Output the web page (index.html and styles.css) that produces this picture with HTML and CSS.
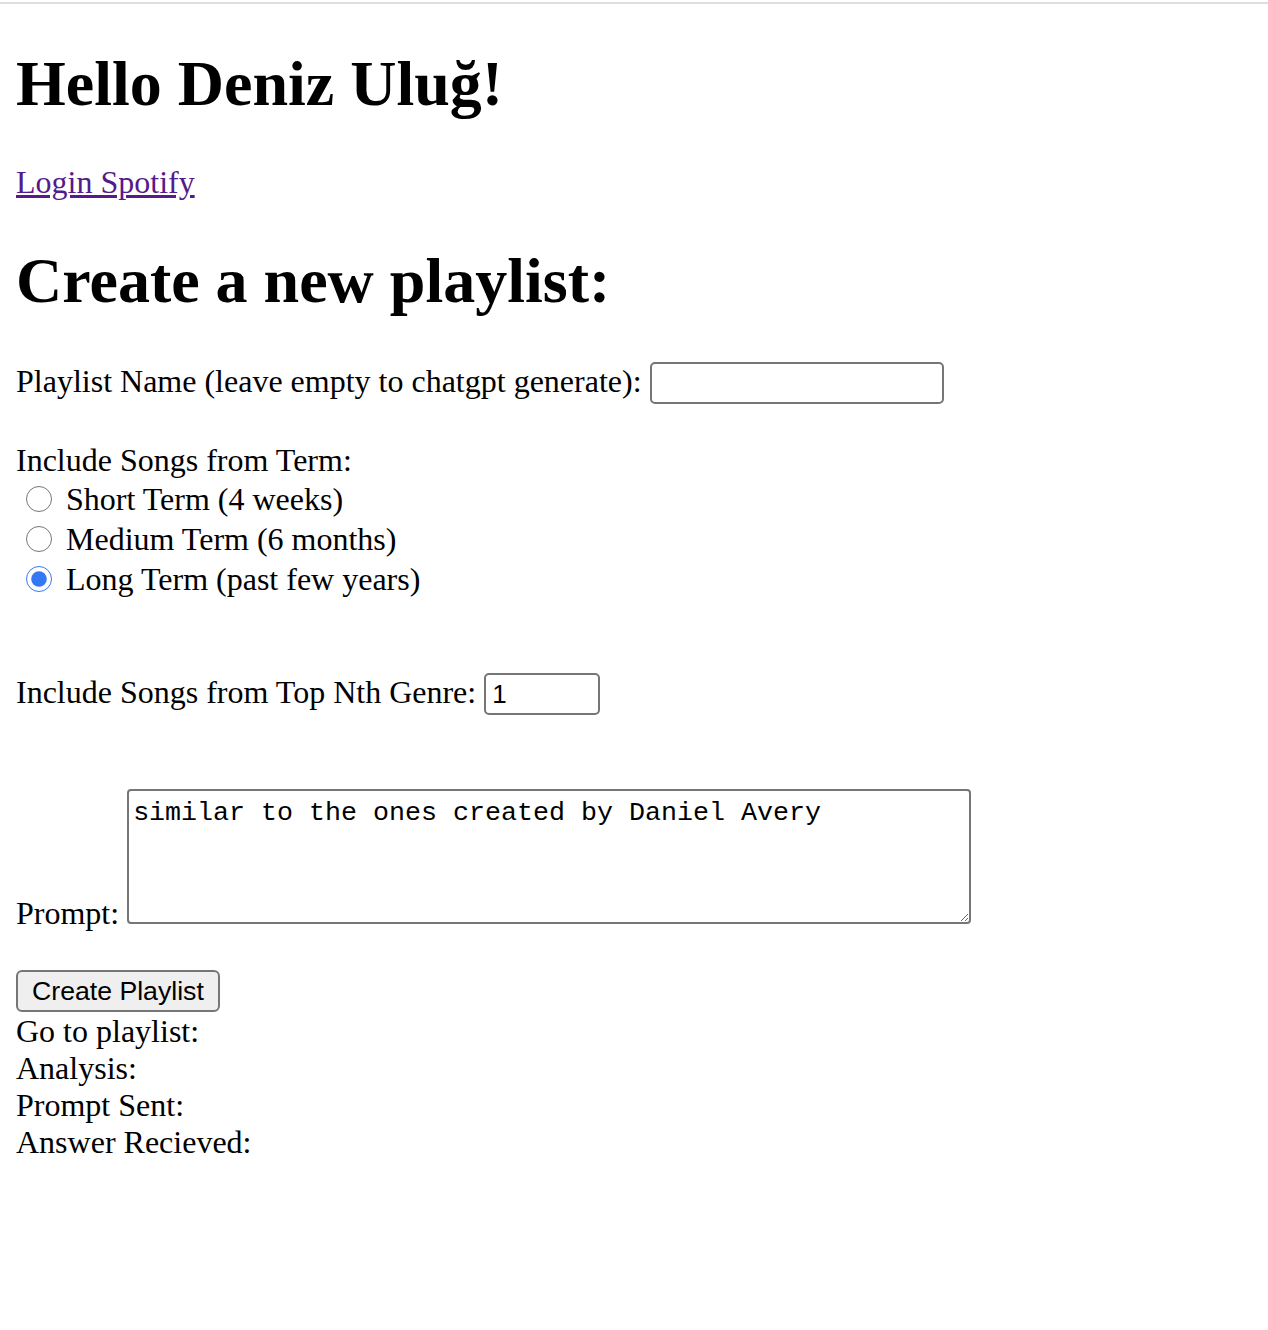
FILE: index.html
```html
<!DOCTYPE html>
<html lang="en">
<head>
    <meta charset="UTF-8">
    <meta name="viewport" content="width=device-width, initial-scale=1.0">
    <title>Spotify Playlist Generator</title>
    <link rel="stylesheet" href="styles.css">
</head>
<body>
    <div class="window-edge"></div>

    <h1 class="greeting">Hello Deniz Uluğ!</h1>
    <p class="login"><a href="#" class="login-link">Login Spotify</a></p>

    <h1 class="form-title">Create a new playlist:</h1>

    <form class="playlist-form">
        <div class="field name-field">
            <label for="playlistName">Playlist Name (leave empty to chatgpt generate):</label>
            <input type="text" id="playlistName" class="text-input name-input">
        </div>

        <div class="field term-field">
            <div>Include Songs from Term:</div>
            <div class="radio-row">
                <input type="radio" name="term" id="shortTerm" class="radio">
                <label for="shortTerm">Short Term (4 weeks)</label>
            </div>
            <div class="radio-row">
                <input type="radio" name="term" id="mediumTerm" class="radio">
                <label for="mediumTerm">Medium Term (6 months)</label>
            </div>
            <div class="radio-row">
                <input type="radio" name="term" id="longTerm" class="radio" checked>
                <label for="longTerm">Long Term (past few years)</label>
            </div>
        </div>

        <div class="field genre-field">
            <label for="genreRank">Include Songs from Top Nth Genre:</label>
            <input type="text" id="genreRank" class="text-input genre-input" value="1">
        </div>

        <div class="field prompt-field">
            <label for="prompt">Prompt:</label>
            <textarea id="prompt" class="prompt-input">similar to the ones created by Daniel Avery</textarea>
        </div>

        <button type="button" class="create-button">Create Playlist</button>
    </form>

    <div class="results">
        <div>Go to playlist:</div>
        <div>Analysis:</div>
        <div>Prompt Sent:</div>
        <div>Answer Recieved:</div>
    </div>
</body>
</html>
```

FILE: styles.css
```css
* {
    box-sizing: border-box;
}

body {
    margin: 0;
    padding: 0 16px;
    font-family: 'Liberation Serif', 'Times New Roman', serif;
    font-size: 32px;
    color: #000000;
    background-color: #ffffff;
}

.window-edge {
    height: 2px;
    margin: 2px -16px 0;
    background: #dedede;
}

h1 {
    font-size: 64px;
    font-weight: bold;
}

.greeting {
    margin: 43px 0 43px;
}

.login {
    margin: 0;
}

.login-link {
    color: #551a8b;
}

.form-title {
    margin: 43px 0 44px;
}

.field {
    margin-bottom: 36px;
}

.name-field {
    margin-bottom: 38px;
}

.text-input {
    font-family: 'Liberation Sans', Arial, sans-serif;
    font-size: 26px;
    height: 42px;
    padding: 2px 6px;
    border: 2px solid #767676;
    border-radius: 5px;
    margin: 0;
    vertical-align: baseline;
}

.name-input {
    width: 294px;
}

.radio-row {
    height: 40px;
    display: flex;
    align-items: center;
}

.radio {
    width: 26px;
    height: 26px;
    margin: 0 14px 0 10px;
    accent-color: #3478f6;
}

.genre-field {
    margin-top: 74px;
    margin-bottom: 74px;
}

.genre-input {
    width: 116px;
}

.prompt-field {
    margin-bottom: 38px;
}

.prompt-input {
    width: 844px;
    height: 135px;
    margin: 0;
    padding: 7px 4px 4px;
    font-family: 'Liberation Mono', 'Courier New', monospace;
    font-size: 26.67px;
    border: 2px solid #767676;
    border-radius: 4px;
    vertical-align: baseline;
}

.create-button {
    display: block;
    font-family: 'Liberation Sans', Arial, sans-serif;
    font-size: 26.67px;
    height: 42px;
    padding: 0 14px;
    background: #efefef;
    border: 2px solid #767676;
    border-radius: 6px;
    color: #000000;
}

.results {
    margin-top: 1px;
    line-height: 37px;
}
```
